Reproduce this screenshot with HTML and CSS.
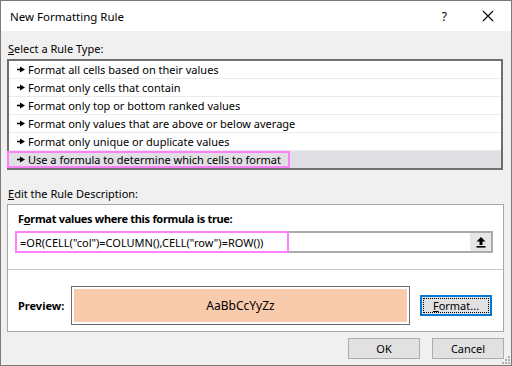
FILE: index.html
```html
<!DOCTYPE html>
<html>
<head>
<meta charset="utf-8">
<link rel="stylesheet" href="styles.css">
</head>
<body>
<div class="window">
  <div class="titlebar">
    <span class="title">New Formatting Rule</span>
    <span class="help">?</span>
    <svg class="close" width="12" height="12" viewBox="0 0 12 12"><path d="M1 1L11 11M11 1L1 11" stroke="#000" stroke-width="1.1" fill="none"/></svg>
  </div>
  <div class="content">
    <div class="label"><u>S</u>elect a Rule Type:</div>
    <div class="list">
      <div class="item"><svg class="arr" width="8" height="7" viewBox="0 0 8 7"><path d="M0 3.5H4" stroke="#000" stroke-width="1.6"/><path d="M3 0.5L8 3.5L3 6.5Z" fill="#000"/></svg>Format all cells based on their values</div>
      <div class="item"><svg class="arr" width="8" height="7" viewBox="0 0 8 7"><path d="M0 3.5H4" stroke="#000" stroke-width="1.6"/><path d="M3 0.5L8 3.5L3 6.5Z" fill="#000"/></svg>Format only cells that contain</div>
      <div class="item"><svg class="arr" width="8" height="7" viewBox="0 0 8 7"><path d="M0 3.5H4" stroke="#000" stroke-width="1.6"/><path d="M3 0.5L8 3.5L3 6.5Z" fill="#000"/></svg>Format only top or bottom ranked values</div>
      <div class="item"><svg class="arr" width="8" height="7" viewBox="0 0 8 7"><path d="M0 3.5H4" stroke="#000" stroke-width="1.6"/><path d="M3 0.5L8 3.5L3 6.5Z" fill="#000"/></svg>Format only values that are above or below average</div>
      <div class="item"><svg class="arr" width="8" height="7" viewBox="0 0 8 7"><path d="M0 3.5H4" stroke="#000" stroke-width="1.6"/><path d="M3 0.5L8 3.5L3 6.5Z" fill="#000"/></svg>Format only unique or duplicate values</div>
      <div class="item selected"><span class="mark"></span><svg class="arr" width="8" height="7" viewBox="0 0 8 7"><path d="M0 3.5H4" stroke="#000" stroke-width="1.6"/><path d="M3 0.5L8 3.5L3 6.5Z" fill="#000"/></svg>Use a formula to determine which cells to format</div>
    </div>
    <div class="label label2"><u>E</u>dit the Rule Description:</div>
    <div class="panel">
      <div class="panel-top">
        <div class="bold-label">F<u>o</u>rmat values where this formula is true:</div>
        <div class="input">
          <span class="formula">=OR(CELL("col")=COLUMN(),CELL("row")=ROW())</span>
          <span class="mark mark2"></span>
          <span class="refbtn"><svg width="10" height="11" viewBox="0 0 10 11"><path d="M5 0L9.5 4.5H6.5V8H3.5V4.5H0.5Z" fill="#000"/><rect x="0.5" y="9" width="9" height="1.6" fill="#000"/></svg></span>
        </div>
      </div>
      <div class="panel-bottom">
        <div class="bold-label prev-label">Preview:</div>
        <div class="preview"><div class="preview-fill">AaBbCcYyZz</div></div>
        <div class="btn fmt-btn"><span class="focus"><u>F</u>ormat...</span></div>
      </div>
    </div>
    <div class="buttons">
      <div class="btn">OK</div>
      <div class="btn">Cancel</div>
    </div>
    <svg class="grip" width="9" height="9" viewBox="0 0 9 9"><g fill="#b0b0b0"><rect x="7" y="1" width="2" height="2"/><rect x="4" y="4" width="2" height="2"/><rect x="7" y="4" width="2" height="2"/><rect x="1" y="7" width="2" height="2"/><rect x="4" y="7" width="2" height="2"/><rect x="7" y="7" width="2" height="2"/></g></svg>
  </div>
</div>
</body>
</html>
```
FILE: styles.css
```css
* { box-sizing: border-box; }
html, body { margin: 0; padding: 0; }
body {
  font-family: "Noto Sans", "Open Sans", sans-serif;
  font-size: 11px;
  color: #000;
  background: #fff;
}
.window {
  width: 512px;
  height: 366px;
  border: 1px solid #7a7a7a;
  display: flex;
  flex-direction: column;
  background: #f0f0f0;
}
.titlebar {
  height: 30px;
  background: #fff;
  display: flex;
  align-items: center;
  padding-left: 9px;
  flex: none;
}
.title { flex: 1; font-size: 11.5px; }
.help { margin-right: 35px; font-size: 12px; }
.close { margin-right: 17px; }
.content {
  flex: 1;
  position: relative;
  padding: 10px 0 0 6px;
}
.label { line-height: 16px; height: 16px; margin-left: 1px; margin-bottom: 2px; }
.label2 { margin-top: 16px; }
.list {
  width: 496px;
  border: 2px solid #6f6f6f;
  background: #fff;
}
.item {
  height: 18px;
  border-bottom: 1px solid #ebebeb;
  display: flex;
  align-items: center;
  padding-left: 8px;
  position: relative;
  white-space: nowrap;
}
.item:last-child { border-bottom: none; height: 17px; }
.arr { margin-right: 3px; flex: none; }
.selected { background: #dfdfe4; }
.mark {
  position: absolute;
  border: 2px solid #ff80ff;
  left: -2px;
  top: 0;
  width: 283px;
  height: 17px;
}
.panel {
  width: 497px;
  border: 1px solid #a8a8a8;
  background: #fff;
}
.panel-top {
  padding: 6px 10px 16px 7px;
  border-bottom: 1px solid #c8c8c8;
}
.bold-label { font-weight: bold; line-height: 16px; margin-left: 3px; letter-spacing: -0.3px; }
.input {
  margin-top: 4px;
  height: 22px;
  width: 478px;
  border: 2px solid #ababab;
  position: relative;
  display: flex;
  align-items: center;
}
.formula { flex: 1; padding-left: 3px; white-space: nowrap; }
.mark2 { left: -2px; top: -2px; width: 274px; height: 22px; }
.refbtn {
  width: 21px;
  height: 18px;
  background: #e6e6e6;
  display: flex;
  align-items: center;
  justify-content: center;
}
.panel-bottom {
  display: flex;
  align-items: center;
  padding: 16px 0 6px 7px;
}
.prev-label { width: 53px; letter-spacing: 0; }
.preview {
  width: 339px;
  height: 39px;
  border: 1px solid #6d6d6d;
  padding: 2px;
  background: #fff;
}
.preview-fill {
  height: 100%;
  background: #f8cbad;
  display: flex;
  align-items: center;
  justify-content: center;
  font-size: 12px;
}
.btn {
  width: 72px;
  height: 21px;
  border: 1px solid #adadad;
  background: #e1e1e1;
  display: flex;
  align-items: center;
  justify-content: center;
}
.fmt-btn {
  margin-left: 10px;
  border: 2px solid #0078d7;
  padding: 1px;
}
.focus {
  flex: 1;
  align-self: stretch;
  border: 1px dotted #000;
  display: flex;
  align-items: center;
  justify-content: center;
}
.buttons {
  display: flex;
  justify-content: flex-end;
  gap: 12px;
  margin-top: 6px;
  padding-right: 7px;
}
.grip { position: absolute; right: 1px; bottom: 1px; }
```
